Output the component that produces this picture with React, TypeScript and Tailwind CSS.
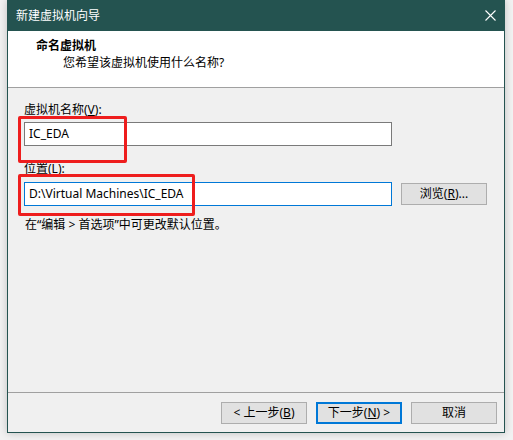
import React from 'react';

const FONT = { fontFamily: '"Noto Sans", "Noto Sans CJK SC", sans-serif' };

const WinButton = ({ children, primary = false }: { children: React.ReactNode; primary?: boolean }) => (
  <div
    className={`w-[86px] h-[22px] flex items-center justify-center bg-[#e1e1e1] text-[12px] text-black leading-none ${
      primary ? 'border-2 border-[#0078d7]' : 'border border-[#adadad]'
    }`}
  >
    {children}
  </div>
);

const CloseIcon = () => (
  <svg width="11" height="11" viewBox="0 0 11 11" className="block">
    <path d="M0.5 0.5 L10.5 10.5 M10.5 0.5 L0.5 10.5" stroke="#ffffff" strokeWidth="1.1" fill="none" />
  </svg>
);

export default function App() {
  return (
    <div className="w-[513px] h-[440px] bg-[#f2f2f2] overflow-hidden" style={FONT}>
      <div className="relative ml-[7px] w-[498px] h-[433px] flex flex-col bg-[#f0f0f0] border-x border-b border-[#245350] shadow-[0_0_8px_rgba(0,0,0,0.22)]">
        {/* title bar */}
        <div className="h-[31px] shrink-0 bg-[#245350] flex items-center justify-between pl-[8px] pr-[9px] -mx-px">
          <span className="text-[12px] text-white leading-none pl-px">新建虚拟机向导</span>
          <CloseIcon />
        </div>

        {/* header */}
        <div className="h-[57px] shrink-0 bg-white pt-[7px] pl-[28px] border-b border-[#a0a0a0]">
          <div className="text-[12px] font-bold leading-[16px] text-black">命名虚拟机</div>
          <div className="text-[12px] leading-[16px] text-black pl-[27px] mt-px">您希望该虚拟机使用什么名称?</div>
        </div>

        {/* body */}
        <div className="flex-1 pl-[16px] pt-[14px] text-[12px] text-black">
          <div className="leading-[16px]">虚拟机名称(<span className="underline">V</span>):</div>
          <div className="mt-[4px] w-[368px] h-[24px] bg-white border border-[#7a7a7a] flex items-center pl-[4px]">
            IC_EDA
          </div>
          <div className="mt-[15px] leading-[16px]">位置(<span className="underline">L</span>):</div>
          <div className="mt-[5px] flex items-center gap-[9px]">
            <div className="w-[368px] h-[24px] bg-white border border-[#0078d7] flex items-center pl-[4px]">
              D:\Virtual Machines\IC_EDA
            </div>
            <WinButton>
              浏览(<span className="underline">R</span>)...
            </WinButton>
          </div>
          <div className="mt-[11px] leading-[16px] pl-px">在“编辑 &gt; 首选项”中可更改默认位置。</div>
        </div>

        {/* footer */}
        <div className="shrink-0 border-t border-[#a0a0a0] pt-[9px] pb-[8px] pr-[7px] flex justify-end gap-[9px]">
          <WinButton>
            &lt; 上一步(<span className="underline">B</span>)
          </WinButton>
          <WinButton primary>
            下一步(<span className="underline">N</span>) &gt;
          </WinButton>
          <WinButton>取消</WinButton>
        </div>

        {/* annotation boxes */}
        <div className="absolute left-[10px] top-[116px] w-[109px] h-[47px] border-[3px] border-[#ee1d1d] rounded-[2px]" />
        <div className="absolute left-[10px] top-[174px] w-[177px] h-[42px] border-[3px] border-[#ee1d1d] rounded-[2px]" />
      </div>
    </div>
  );
}
